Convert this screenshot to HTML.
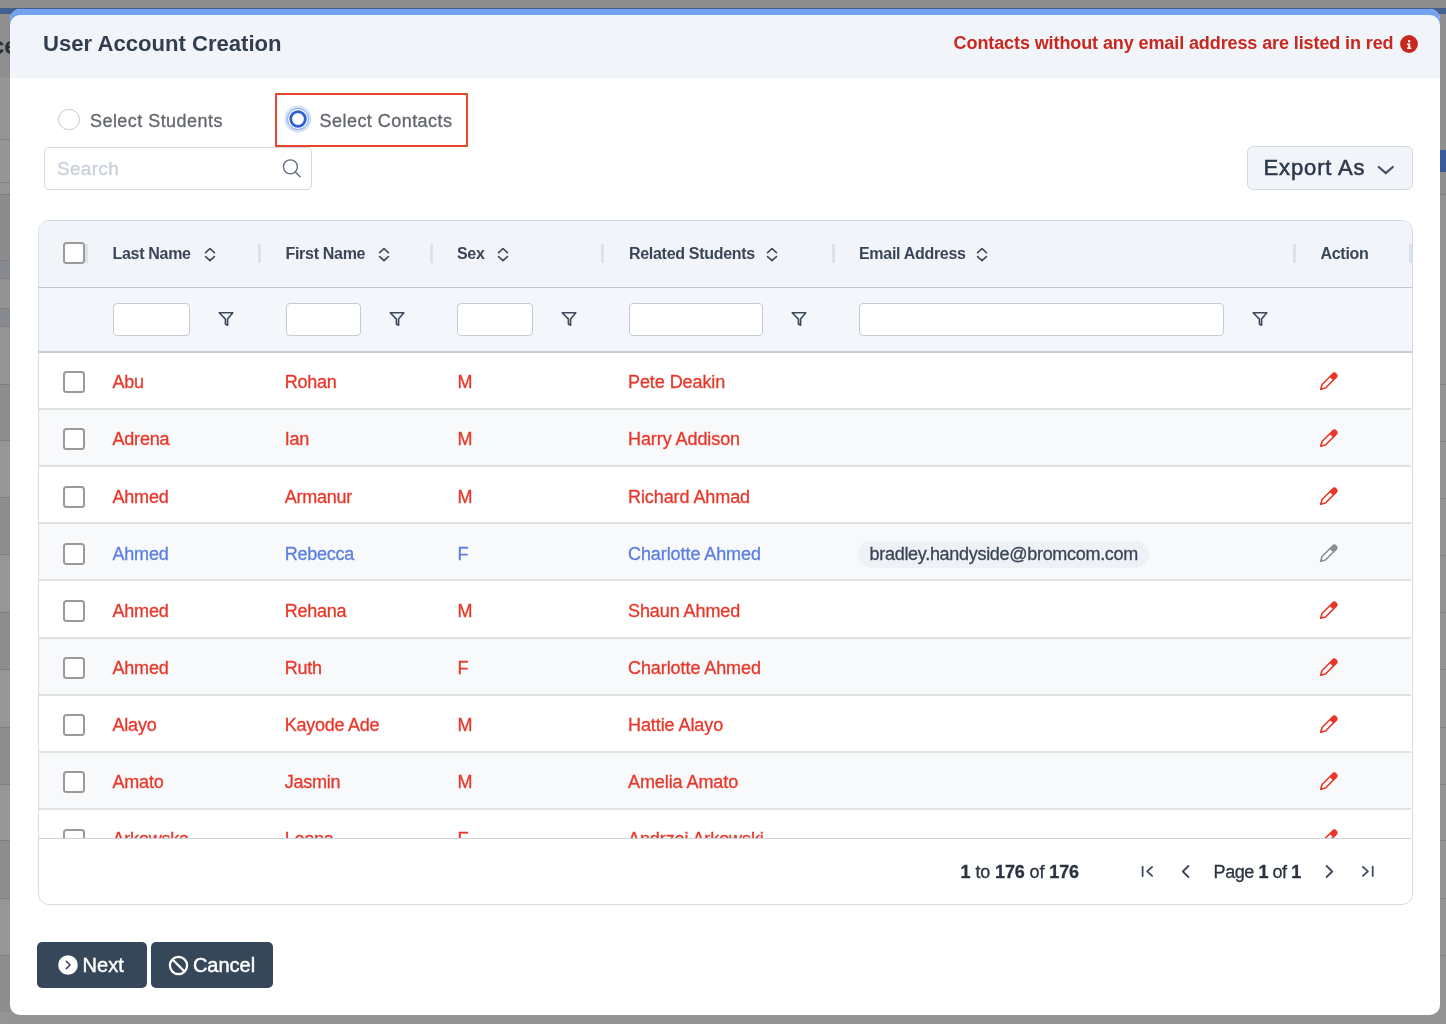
<!DOCTYPE html>
<html><head><meta charset="utf-8"><style>
*{box-sizing:border-box;margin:0;padding:0}
html,body{width:1446px;height:1024px;overflow:hidden}
body{background:#939393;font-family:"Liberation Sans",sans-serif;position:relative;will-change:transform}
.t{position:absolute;white-space:nowrap;line-height:normal;-webkit-font-smoothing:antialiased}
.a{position:absolute}
</style></head><body>
<div class="a" style="left:0;top:0;width:1446px;height:8px;background:#8e8e8e"></div>
<div class="a" style="left:0;top:8px;width:1446px;height:6px;background:#41608f"></div>
<div class="a" style="left:0;top:14px;width:10px;height:63px;background:#8f8f8f"></div>
<div class="a" style="left:0;top:77px;width:10px;height:117px;background:#959595"></div>
<div class="a" style="left:0;top:194px;width:10px;height:66px;background:#8b8c8e"></div>
<div class="a" style="left:0;top:260px;width:10px;height:19px;background:#878b90"></div>
<div class="a" style="left:0;top:279px;width:10px;height:29px;background:#939393"></div>
<div class="a" style="left:0;top:308px;width:10px;height:18px;background:#878b90"></div>
<div class="a" style="left:0;top:326px;width:10px;height:58px;background:#949494"></div>
<div class="a" style="left:0;top:384px;width:10px;height:56px;background:#8d8d8d"></div>
<div class="a" style="left:0;top:440px;width:10px;height:57px;background:#969696"></div>
<div class="a" style="left:0;top:497px;width:10px;height:57px;background:#8d8d8d"></div>
<div class="a" style="left:0;top:554px;width:10px;height:58px;background:#969696"></div>
<div class="a" style="left:0;top:612px;width:10px;height:57px;background:#8d8d8d"></div>
<div class="a" style="left:0;top:669px;width:10px;height:58px;background:#969696"></div>
<div class="a" style="left:0;top:727px;width:10px;height:57px;background:#8d8d8d"></div>
<div class="a" style="left:0;top:784px;width:10px;height:56px;background:#969696"></div>
<div class="a" style="left:0;top:840px;width:10px;height:58px;background:#8d8d8d"></div>
<div class="a" style="left:0;top:898px;width:10px;height:57px;background:#969696"></div>
<div class="a" style="left:0;top:955px;width:10px;height:57px;background:#8d8d8d"></div>
<div class="a" style="left:0;top:1012px;width:10px;height:12px;background:#959595"></div>
<div class="a" style="left:0;top:139px;width:10px;height:1px;background:#7e7e7e"></div>
<div class="a" style="left:0;top:182px;width:10px;height:1px;background:#7e7e7e"></div>
<div class="a" style="left:0;top:194px;width:10px;height:1px;background:#7e7e7e"></div>
<div class="a" style="left:0;top:260px;width:10px;height:1px;background:#7e7e7e"></div>
<div class="a" style="left:0;top:278px;width:10px;height:1px;background:#7e7e7e"></div>
<div class="a" style="left:0;top:308px;width:10px;height:1px;background:#7e7e7e"></div>
<div class="a" style="left:0;top:326px;width:10px;height:1px;background:#7e7e7e"></div>
<div class="a" style="left:0;top:384px;width:10px;height:1px;background:#7e7e7e"></div>
<div class="a" style="left:0;top:440px;width:10px;height:1px;background:#7e7e7e"></div>
<div class="a" style="left:0;top:497px;width:10px;height:1px;background:#7e7e7e"></div>
<div class="a" style="left:0;top:554px;width:10px;height:1px;background:#7e7e7e"></div>
<div class="a" style="left:0;top:612px;width:10px;height:1px;background:#7e7e7e"></div>
<div class="a" style="left:0;top:669px;width:10px;height:1px;background:#7e7e7e"></div>
<div class="a" style="left:0;top:727px;width:10px;height:1px;background:#7e7e7e"></div>
<div class="a" style="left:0;top:784px;width:10px;height:1px;background:#7e7e7e"></div>
<div class="a" style="left:0;top:840px;width:10px;height:1px;background:#7e7e7e"></div>
<div class="a" style="left:0;top:898px;width:10px;height:1px;background:#7e7e7e"></div>
<div class="a" style="left:0;top:955px;width:10px;height:1px;background:#7e7e7e"></div>
<div class="a" style="left:1440px;top:14px;width:6px;height:136px;background:#8f8f8f"></div>
<div class="a" style="left:1440px;top:150px;width:6px;height:22px;background:#3a5a9a"></div>
<div class="a" style="left:1440px;top:172px;width:6px;height:22px;background:#8f8f8f"></div>
<div class="a" style="left:1440px;top:194px;width:6px;height:830px;background:#939393"></div>
<div class="a" style="left:1440px;top:194px;width:6px;height:1px;background:#808080"></div>
<div class="a" style="left:1440px;top:384px;width:6px;height:1px;background:#808080"></div>
<div class="a" style="left:1440px;top:441px;width:6px;height:1px;background:#808080"></div>
<div class="a" style="left:1440px;top:498px;width:6px;height:1px;background:#808080"></div>
<div class="a" style="left:1440px;top:555px;width:6px;height:1px;background:#808080"></div>
<div class="a" style="left:1440px;top:612px;width:6px;height:1px;background:#808080"></div>
<div class="a" style="left:1440px;top:669px;width:6px;height:1px;background:#808080"></div>
<div class="a" style="left:1440px;top:727px;width:6px;height:1px;background:#808080"></div>
<div class="a" style="left:1440px;top:784px;width:6px;height:1px;background:#808080"></div>
<div class="a" style="left:1440px;top:840px;width:6px;height:1px;background:#808080"></div>
<div class="a" style="left:1440px;top:898px;width:6px;height:1px;background:#808080"></div>
<div class="a" style="left:1440px;top:955px;width:6px;height:1px;background:#808080"></div>
<div class="t" style="left:-9px;top:31.5px;font-size:24px;font-weight:bold;color:#2a2f38">ce</div>
<div class="a" style="left:10px;top:9px;width:1430px;height:1006px;background:#fff;border-radius:10px;overflow:hidden"><div class="a" style="left:0;top:0;width:1430px;height:24px;background:#72a3f3"></div><div class="a" style="left:0;top:6px;width:1430px;height:63px;background:#f1f4f9;border-radius:10px 10px 0 0"></div></div>
<div class="t" style="left:43px;top:30.70px;font-size:22.1px;font-weight:bold;color:#323e50;">User Account Creation</div>

<div class="t" style="left:953.6px;top:33.41px;font-size:18px;font-weight:bold;color:#c9281e;letter-spacing:-0.1px">Contacts without any email address are listed in red</div>

<svg class="a" style="left:1400.2px;top:35.3px" width="18" height="18" viewBox="0 0 18 18"><circle cx="9" cy="9" r="8.9" fill="#c9281e"/><rect x="8" y="5.2" width="2.2" height="2.1" fill="#fff"/><path d="M7 8.4h3.2v4h1.1v1.6H7v-1.6h1.2v-2.4H7z" fill="#fff"/></svg>
<div class="a" style="left:58px;top:108.5px;width:21.5px;height:21.5px;border-radius:50%;border:1.5px solid #c8c8c8;background:#fff"></div>
<div class="t" style="left:90px;top:110.91px;font-size:18px;font-weight:normal;color:#62666d;-webkit-text-stroke:0.3px #62666d;letter-spacing:0.45px">Select Students</div>

<div class="a" style="left:275px;top:93px;width:193px;height:54px;border:2.4px solid #e8462e"></div>
<svg class="a" style="left:284px;top:105px" width="28" height="28" viewBox="0 0 28 28"><circle cx="14" cy="14" r="13.5" fill="#d3e1f6"/><circle cx="14" cy="14" r="10.5" fill="#fff" stroke="#7fa3e6" stroke-width="1"/><circle cx="14" cy="14" r="7.3" fill="none" stroke="#2f5fd0" stroke-width="2.8"/></svg>
<div class="t" style="left:319.6px;top:110.91px;font-size:18px;font-weight:normal;color:#62666d;-webkit-text-stroke:0.3px #62666d;letter-spacing:0.45px">Select Contacts</div>

<div class="a" style="left:44px;top:147px;width:268px;height:43px;border:1.5px solid #cfd7e2;border-radius:5px;background:#fff"></div>
<div class="t" style="left:57px;top:157.81px;font-size:19px;font-weight:normal;color:#c8d0da;-webkit-text-stroke:0.3px #c8d0da;letter-spacing:0.3px">Search</div>

<svg class="a" style="left:280px;top:157px" width="24" height="24" viewBox="0 0 24 24"><circle cx="10.4" cy="9.8" r="7" fill="none" stroke="#626f82" stroke-width="1.35"/><path d="M15.4 15l4.7 4.7" stroke="#626f82" stroke-width="1.5" stroke-linecap="round"/></svg>
<div class="a" style="left:1246.5px;top:146px;width:166px;height:43.5px;border:1.5px solid #d3dbe5;border-radius:6px;background:#f1f4f9"></div>
<div class="t" style="left:1263.6px;top:155.39px;font-size:22px;font-weight:normal;color:#2d3a4c;-webkit-text-stroke:0.55px #2d3a4c;letter-spacing:0.85px;">Export As</div>

<svg class="a" style="left:1376px;top:161px" width="20" height="16" viewBox="0 0 20 16"><path d="M2.8 6l7 6.2 7-6.2" fill="none" stroke="#46546a" stroke-width="2.3" stroke-linecap="round" stroke-linejoin="round"/></svg>
<div class="a" style="left:37.5px;top:219.5px;width:1375.5px;height:685.3px;border:1.6px solid #d6dbe3;border-radius:11px;background:#fff;overflow:hidden">
<div class="a" style="left:0;top:0;width:100%;height:67px;background:#f1f4f9;border-bottom:1.8px solid #c3c8cf"></div>
<div class="a" style="left:0;top:67px;width:100%;height:65px;background:#f3f7fb;border-bottom:2px solid #c9ced5"></div>
</div>
<div class="a" style="left:39px;top:353px;width:1372.4px;height:485.5px;overflow:hidden">
<div class="a" style="left:0;top:0.0px;width:100%;height:57.1px;background:#fff;border-bottom:2px solid #e0e1e1"></div>
<div class="a" style="left:24.299999999999997px;top:18.3px;width:22px;height:22px;border:2.5px solid #9a9a9a;border-radius:3.5px;background:#fff"></div>
<div class="t" style="left:73.5px;top:19.29px;font-size:18px;font-weight:normal;color:#e8372a;-webkit-text-stroke:0.3px #e8372a;letter-spacing:-0.2px">Abu</div>

<div class="t" style="left:245.8px;top:19.29px;font-size:18px;font-weight:normal;color:#e8372a;-webkit-text-stroke:0.3px #e8372a;letter-spacing:-0.25px">Rohan</div>

<div class="t" style="left:418.5px;top:19.29px;font-size:18px;font-weight:normal;color:#e8372a;-webkit-text-stroke:0.3px #e8372a;">M</div>

<div class="t" style="left:589px;top:19.29px;font-size:18px;font-weight:normal;color:#e8372a;-webkit-text-stroke:0.3px #e8372a;letter-spacing:-0.08px">Pete Deakin</div>

<svg class="a" style="left:1280px;top:19.2px" width="19" height="19" viewBox="0 0 20 20"><path d="M1.8 18.2L3.2 13.2 14.3 2.1a2.4 2.4 0 0 1 3.6 3.6L6.8 16.8z" fill="none" stroke="#e8372a" stroke-width="1.7" stroke-linejoin="round"/><path d="M11.2 5.2L14.3 2.1a2.4 2.4 0 0 1 3.6 3.6L14.8 8.8z" fill="#e8372a"/></svg>
<div class="a" style="left:0;top:57.1px;width:100%;height:57.1px;background:#f8f9fa;border-bottom:2px solid #e0e1e1"></div>
<div class="a" style="left:24.299999999999997px;top:75.4px;width:22px;height:22px;border:2.5px solid #9a9a9a;border-radius:3.5px;background:#fff"></div>
<div class="t" style="left:73.5px;top:76.43px;font-size:18px;font-weight:normal;color:#e8372a;-webkit-text-stroke:0.3px #e8372a;letter-spacing:-0.2px">Adrena</div>

<div class="t" style="left:245.8px;top:76.43px;font-size:18px;font-weight:normal;color:#e8372a;-webkit-text-stroke:0.3px #e8372a;letter-spacing:-0.25px">Ian</div>

<div class="t" style="left:418.5px;top:76.43px;font-size:18px;font-weight:normal;color:#e8372a;-webkit-text-stroke:0.3px #e8372a;">M</div>

<div class="t" style="left:589px;top:76.43px;font-size:18px;font-weight:normal;color:#e8372a;-webkit-text-stroke:0.3px #e8372a;letter-spacing:-0.08px">Harry Addison</div>

<svg class="a" style="left:1280px;top:76.3px" width="19" height="19" viewBox="0 0 20 20"><path d="M1.8 18.2L3.2 13.2 14.3 2.1a2.4 2.4 0 0 1 3.6 3.6L6.8 16.8z" fill="none" stroke="#e8372a" stroke-width="1.7" stroke-linejoin="round"/><path d="M11.2 5.2L14.3 2.1a2.4 2.4 0 0 1 3.6 3.6L14.8 8.8z" fill="#e8372a"/></svg>
<div class="a" style="left:0;top:114.3px;width:100%;height:57.1px;background:#fff;border-bottom:2px solid #e0e1e1"></div>
<div class="a" style="left:24.299999999999997px;top:132.6px;width:22px;height:22px;border:2.5px solid #9a9a9a;border-radius:3.5px;background:#fff"></div>
<div class="t" style="left:73.5px;top:133.59px;font-size:18px;font-weight:normal;color:#e8372a;-webkit-text-stroke:0.3px #e8372a;letter-spacing:-0.2px">Ahmed</div>

<div class="t" style="left:245.8px;top:133.59px;font-size:18px;font-weight:normal;color:#e8372a;-webkit-text-stroke:0.3px #e8372a;letter-spacing:-0.25px">Armanur</div>

<div class="t" style="left:418.5px;top:133.59px;font-size:18px;font-weight:normal;color:#e8372a;-webkit-text-stroke:0.3px #e8372a;">M</div>

<div class="t" style="left:589px;top:133.59px;font-size:18px;font-weight:normal;color:#e8372a;-webkit-text-stroke:0.3px #e8372a;letter-spacing:-0.08px">Richard Ahmad</div>

<svg class="a" style="left:1280px;top:133.5px" width="19" height="19" viewBox="0 0 20 20"><path d="M1.8 18.2L3.2 13.2 14.3 2.1a2.4 2.4 0 0 1 3.6 3.6L6.8 16.8z" fill="none" stroke="#e8372a" stroke-width="1.7" stroke-linejoin="round"/><path d="M11.2 5.2L14.3 2.1a2.4 2.4 0 0 1 3.6 3.6L14.8 8.8z" fill="#e8372a"/></svg>
<div class="a" style="left:0;top:171.4px;width:100%;height:57.1px;background:#f8f9fa;border-bottom:2px solid #e0e1e1"></div>
<div class="a" style="left:24.299999999999997px;top:189.7px;width:22px;height:22px;border:2.5px solid #9a9a9a;border-radius:3.5px;background:#fff"></div>
<div class="t" style="left:73.5px;top:190.73px;font-size:18px;font-weight:normal;color:#5b7fe0;-webkit-text-stroke:0.3px #5b7fe0;letter-spacing:-0.2px">Ahmed</div>

<div class="t" style="left:245.8px;top:190.73px;font-size:18px;font-weight:normal;color:#5b7fe0;-webkit-text-stroke:0.3px #5b7fe0;letter-spacing:-0.25px">Rebecca</div>

<div class="t" style="left:418.5px;top:190.73px;font-size:18px;font-weight:normal;color:#5b7fe0;-webkit-text-stroke:0.3px #5b7fe0;">F</div>

<div class="t" style="left:589px;top:190.73px;font-size:18px;font-weight:normal;color:#5b7fe0;-webkit-text-stroke:0.3px #5b7fe0;letter-spacing:-0.08px">Charlotte Ahmed</div>

<div class="a" style="left:819.3px;top:187.8px;width:291px;height:27.5px;border-radius:14px;background:#eef1f6"></div>
<div class="t" style="left:830.6px;top:190.73px;font-size:18px;font-weight:normal;color:#3a4556;-webkit-text-stroke:0.3px #3a4556;letter-spacing:-0.3px">bradley.handyside@bromcom.com</div>

<svg class="a" style="left:1280px;top:190.6px" width="19" height="19" viewBox="0 0 20 20"><path d="M1.8 18.2L3.2 13.2 14.3 2.1a2.4 2.4 0 0 1 3.6 3.6L6.8 16.8z" fill="none" stroke="#8a8f96" stroke-width="1.7" stroke-linejoin="round"/><path d="M11.2 5.2L14.3 2.1a2.4 2.4 0 0 1 3.6 3.6L14.8 8.8z" fill="#8a8f96"/></svg>
<div class="a" style="left:0;top:228.6px;width:100%;height:57.1px;background:#fff;border-bottom:2px solid #e0e1e1"></div>
<div class="a" style="left:24.299999999999997px;top:246.9px;width:22px;height:22px;border:2.5px solid #9a9a9a;border-radius:3.5px;background:#fff"></div>
<div class="t" style="left:73.5px;top:247.89px;font-size:18px;font-weight:normal;color:#e8372a;-webkit-text-stroke:0.3px #e8372a;letter-spacing:-0.2px">Ahmed</div>

<div class="t" style="left:245.8px;top:247.89px;font-size:18px;font-weight:normal;color:#e8372a;-webkit-text-stroke:0.3px #e8372a;letter-spacing:-0.25px">Rehana</div>

<div class="t" style="left:418.5px;top:247.89px;font-size:18px;font-weight:normal;color:#e8372a;-webkit-text-stroke:0.3px #e8372a;">M</div>

<div class="t" style="left:589px;top:247.89px;font-size:18px;font-weight:normal;color:#e8372a;-webkit-text-stroke:0.3px #e8372a;letter-spacing:-0.08px">Shaun Ahmed</div>

<svg class="a" style="left:1280px;top:247.8px" width="19" height="19" viewBox="0 0 20 20"><path d="M1.8 18.2L3.2 13.2 14.3 2.1a2.4 2.4 0 0 1 3.6 3.6L6.8 16.8z" fill="none" stroke="#e8372a" stroke-width="1.7" stroke-linejoin="round"/><path d="M11.2 5.2L14.3 2.1a2.4 2.4 0 0 1 3.6 3.6L14.8 8.8z" fill="#e8372a"/></svg>
<div class="a" style="left:0;top:285.8px;width:100%;height:57.1px;background:#f8f9fa;border-bottom:2px solid #e0e1e1"></div>
<div class="a" style="left:24.299999999999997px;top:304.0px;width:22px;height:22px;border:2.5px solid #9a9a9a;border-radius:3.5px;background:#fff"></div>
<div class="t" style="left:73.5px;top:305.03px;font-size:18px;font-weight:normal;color:#e8372a;-webkit-text-stroke:0.3px #e8372a;letter-spacing:-0.2px">Ahmed</div>

<div class="t" style="left:245.8px;top:305.03px;font-size:18px;font-weight:normal;color:#e8372a;-webkit-text-stroke:0.3px #e8372a;letter-spacing:-0.25px">Ruth</div>

<div class="t" style="left:418.5px;top:305.03px;font-size:18px;font-weight:normal;color:#e8372a;-webkit-text-stroke:0.3px #e8372a;">F</div>

<div class="t" style="left:589px;top:305.03px;font-size:18px;font-weight:normal;color:#e8372a;-webkit-text-stroke:0.3px #e8372a;letter-spacing:-0.08px">Charlotte Ahmed</div>

<svg class="a" style="left:1280px;top:304.9px" width="19" height="19" viewBox="0 0 20 20"><path d="M1.8 18.2L3.2 13.2 14.3 2.1a2.4 2.4 0 0 1 3.6 3.6L6.8 16.8z" fill="none" stroke="#e8372a" stroke-width="1.7" stroke-linejoin="round"/><path d="M11.2 5.2L14.3 2.1a2.4 2.4 0 0 1 3.6 3.6L14.8 8.8z" fill="#e8372a"/></svg>
<div class="a" style="left:0;top:342.9px;width:100%;height:57.1px;background:#fff;border-bottom:2px solid #e0e1e1"></div>
<div class="a" style="left:24.299999999999997px;top:361.2px;width:22px;height:22px;border:2.5px solid #9a9a9a;border-radius:3.5px;background:#fff"></div>
<div class="t" style="left:73.5px;top:362.18px;font-size:18px;font-weight:normal;color:#e8372a;-webkit-text-stroke:0.3px #e8372a;letter-spacing:-0.2px">Alayo</div>

<div class="t" style="left:245.8px;top:362.18px;font-size:18px;font-weight:normal;color:#e8372a;-webkit-text-stroke:0.3px #e8372a;letter-spacing:-0.25px">Kayode Ade</div>

<div class="t" style="left:418.5px;top:362.18px;font-size:18px;font-weight:normal;color:#e8372a;-webkit-text-stroke:0.3px #e8372a;">M</div>

<div class="t" style="left:589px;top:362.18px;font-size:18px;font-weight:normal;color:#e8372a;-webkit-text-stroke:0.3px #e8372a;letter-spacing:-0.08px">Hattie Alayo</div>

<svg class="a" style="left:1280px;top:362.1px" width="19" height="19" viewBox="0 0 20 20"><path d="M1.8 18.2L3.2 13.2 14.3 2.1a2.4 2.4 0 0 1 3.6 3.6L6.8 16.8z" fill="none" stroke="#e8372a" stroke-width="1.7" stroke-linejoin="round"/><path d="M11.2 5.2L14.3 2.1a2.4 2.4 0 0 1 3.6 3.6L14.8 8.8z" fill="#e8372a"/></svg>
<div class="a" style="left:0;top:400.1px;width:100%;height:57.1px;background:#f8f9fa;border-bottom:2px solid #e0e1e1"></div>
<div class="a" style="left:24.299999999999997px;top:418.3px;width:22px;height:22px;border:2.5px solid #9a9a9a;border-radius:3.5px;background:#fff"></div>
<div class="t" style="left:73.5px;top:419.33px;font-size:18px;font-weight:normal;color:#e8372a;-webkit-text-stroke:0.3px #e8372a;letter-spacing:-0.2px">Amato</div>

<div class="t" style="left:245.8px;top:419.33px;font-size:18px;font-weight:normal;color:#e8372a;-webkit-text-stroke:0.3px #e8372a;letter-spacing:-0.25px">Jasmin</div>

<div class="t" style="left:418.5px;top:419.33px;font-size:18px;font-weight:normal;color:#e8372a;-webkit-text-stroke:0.3px #e8372a;">M</div>

<div class="t" style="left:589px;top:419.33px;font-size:18px;font-weight:normal;color:#e8372a;-webkit-text-stroke:0.3px #e8372a;letter-spacing:-0.08px">Amelia Amato</div>

<svg class="a" style="left:1280px;top:419.2px" width="19" height="19" viewBox="0 0 20 20"><path d="M1.8 18.2L3.2 13.2 14.3 2.1a2.4 2.4 0 0 1 3.6 3.6L6.8 16.8z" fill="none" stroke="#e8372a" stroke-width="1.7" stroke-linejoin="round"/><path d="M11.2 5.2L14.3 2.1a2.4 2.4 0 0 1 3.6 3.6L14.8 8.8z" fill="#e8372a"/></svg>
<div class="a" style="left:0;top:457.2px;width:100%;height:57.1px;background:#fff;border-bottom:2px solid #e0e1e1"></div>
<div class="a" style="left:24.299999999999997px;top:475.5px;width:22px;height:22px;border:2.5px solid #9a9a9a;border-radius:3.5px;background:#fff"></div>
<div class="t" style="left:73.5px;top:476.48px;font-size:18px;font-weight:normal;color:#e8372a;-webkit-text-stroke:0.3px #e8372a;letter-spacing:-0.2px">Arkowska</div>

<div class="t" style="left:245.8px;top:476.48px;font-size:18px;font-weight:normal;color:#e8372a;-webkit-text-stroke:0.3px #e8372a;letter-spacing:-0.25px">Leona</div>

<div class="t" style="left:418.5px;top:476.48px;font-size:18px;font-weight:normal;color:#e8372a;-webkit-text-stroke:0.3px #e8372a;">F</div>

<div class="t" style="left:589px;top:476.48px;font-size:18px;font-weight:normal;color:#e8372a;-webkit-text-stroke:0.3px #e8372a;letter-spacing:-0.08px">Andrzej Arkowski</div>

<svg class="a" style="left:1280px;top:476.4px" width="19" height="19" viewBox="0 0 20 20"><path d="M1.8 18.2L3.2 13.2 14.3 2.1a2.4 2.4 0 0 1 3.6 3.6L6.8 16.8z" fill="none" stroke="#e8372a" stroke-width="1.7" stroke-linejoin="round"/><path d="M11.2 5.2L14.3 2.1a2.4 2.4 0 0 1 3.6 3.6L14.8 8.8z" fill="#e8372a"/></svg>
</div>
<div class="a" style="left:63.3px;top:242.4px;width:21.6px;height:21.6px;border:2.5px solid #9a9a9a;border-radius:3.5px;background:#fff"></div>
<div class="t" style="left:112.5px;top:245.12px;font-size:16px;font-weight:bold;color:#3a4557;letter-spacing:-0.3px">Last Name</div>

<svg class="a" style="left:203px;top:241.5px" width="14" height="22" viewBox="0 0 14 22"><path d="M2.6 10.6l4.4-4.1 4.4 4.1M2.6 14.6l4.4 4.1 4.4-4.1" fill="none" stroke="#3d4a5c" stroke-width="1.6" stroke-linecap="round" stroke-linejoin="round"/></svg>
<div class="t" style="left:285.5px;top:245.12px;font-size:16px;font-weight:bold;color:#3a4557;letter-spacing:-0.3px">First Name</div>

<svg class="a" style="left:377px;top:241.5px" width="14" height="22" viewBox="0 0 14 22"><path d="M2.6 10.6l4.4-4.1 4.4 4.1M2.6 14.6l4.4 4.1 4.4-4.1" fill="none" stroke="#3d4a5c" stroke-width="1.6" stroke-linecap="round" stroke-linejoin="round"/></svg>
<div class="t" style="left:457px;top:245.12px;font-size:16px;font-weight:bold;color:#3a4557;letter-spacing:-0.3px">Sex</div>

<svg class="a" style="left:495.6px;top:241.5px" width="14" height="22" viewBox="0 0 14 22"><path d="M2.6 10.6l4.4-4.1 4.4 4.1M2.6 14.6l4.4 4.1 4.4-4.1" fill="none" stroke="#3d4a5c" stroke-width="1.6" stroke-linecap="round" stroke-linejoin="round"/></svg>
<div class="t" style="left:629px;top:245.12px;font-size:16px;font-weight:bold;color:#3a4557;letter-spacing:-0.3px">Related Students</div>

<svg class="a" style="left:765px;top:241.5px" width="14" height="22" viewBox="0 0 14 22"><path d="M2.6 10.6l4.4-4.1 4.4 4.1M2.6 14.6l4.4 4.1 4.4-4.1" fill="none" stroke="#3d4a5c" stroke-width="1.6" stroke-linecap="round" stroke-linejoin="round"/></svg>
<div class="t" style="left:859px;top:245.12px;font-size:16px;font-weight:bold;color:#3a4557;letter-spacing:-0.3px">Email Address</div>

<svg class="a" style="left:975.4px;top:241.5px" width="14" height="22" viewBox="0 0 14 22"><path d="M2.6 10.6l4.4-4.1 4.4 4.1M2.6 14.6l4.4 4.1 4.4-4.1" fill="none" stroke="#3d4a5c" stroke-width="1.6" stroke-linecap="round" stroke-linejoin="round"/></svg>
<div class="t" style="left:1320.5px;top:245.12px;font-size:16px;font-weight:bold;color:#3a4557;letter-spacing:-0.3px">Action</div>

<div class="a" style="left:84.5px;top:244px;width:3px;height:19px;background:#dde1ea"></div>
<div class="a" style="left:258.2px;top:244px;width:3px;height:19px;background:#dde1ea"></div>
<div class="a" style="left:430.2px;top:244px;width:3px;height:19px;background:#dde1ea"></div>
<div class="a" style="left:601.3px;top:244px;width:3px;height:19px;background:#dde1ea"></div>
<div class="a" style="left:831.6px;top:244px;width:3px;height:19px;background:#dde1ea"></div>
<div class="a" style="left:1293px;top:244px;width:3px;height:19px;background:#dde1ea"></div>
<div class="a" style="left:1408.5px;top:244px;width:3px;height:19px;background:#dde1ea"></div>
<div class="a" style="left:113px;top:303px;width:76.5px;height:32.5px;border:1.5px solid #c6cbd2;border-radius:4px;background:#fff"></div>
<svg class="a" style="left:217px;top:310px" width="18" height="18" viewBox="0 0 18 18"><path d="M2.2 2.8h13.6l-5.2 6.3v6.2l-2.2-1.3V9.1z" fill="none" stroke="#3d4a5c" stroke-width="1.6" stroke-linejoin="round"/></svg>
<div class="a" style="left:285.6px;top:303px;width:75.39999999999998px;height:32.5px;border:1.5px solid #c6cbd2;border-radius:4px;background:#fff"></div>
<svg class="a" style="left:388.4px;top:310px" width="18" height="18" viewBox="0 0 18 18"><path d="M2.2 2.8h13.6l-5.2 6.3v6.2l-2.2-1.3V9.1z" fill="none" stroke="#3d4a5c" stroke-width="1.6" stroke-linejoin="round"/></svg>
<div class="a" style="left:457px;top:303px;width:75.5px;height:32.5px;border:1.5px solid #c6cbd2;border-radius:4px;background:#fff"></div>
<svg class="a" style="left:559.8px;top:310px" width="18" height="18" viewBox="0 0 18 18"><path d="M2.2 2.8h13.6l-5.2 6.3v6.2l-2.2-1.3V9.1z" fill="none" stroke="#3d4a5c" stroke-width="1.6" stroke-linejoin="round"/></svg>
<div class="a" style="left:629px;top:303px;width:133.60000000000002px;height:32.5px;border:1.5px solid #c6cbd2;border-radius:4px;background:#fff"></div>
<svg class="a" style="left:789.9px;top:310px" width="18" height="18" viewBox="0 0 18 18"><path d="M2.2 2.8h13.6l-5.2 6.3v6.2l-2.2-1.3V9.1z" fill="none" stroke="#3d4a5c" stroke-width="1.6" stroke-linejoin="round"/></svg>
<div class="a" style="left:858.9px;top:303px;width:365.4px;height:32.5px;border:1.5px solid #c6cbd2;border-radius:4px;background:#fff"></div>
<svg class="a" style="left:1251.4px;top:310px" width="18" height="18" viewBox="0 0 18 18"><path d="M2.2 2.8h13.6l-5.2 6.3v6.2l-2.2-1.3V9.1z" fill="none" stroke="#3d4a5c" stroke-width="1.6" stroke-linejoin="round"/></svg>
<div class="a" style="left:39px;top:837.8px;width:1372.4px;height:1.3px;background:#cfd3d9"></div>
<div class="t" style="left:960.6px;top:862.31px;font-size:18px;font-weight:normal;color:#2b3340;-webkit-text-stroke:0.3px #2b3340;letter-spacing:-0.12px"><b>1</b> to <b>176</b> of <b>176</b></div>

<div class="t" style="left:1213.6px;top:862.31px;font-size:18px;font-weight:normal;color:#2b3340;-webkit-text-stroke:0.3px #2b3340;letter-spacing:-0.45px">Page <b>1</b> of <b>1</b></div>

<svg class="a" style="left:1139px;top:863px" width="18" height="16" viewBox="0 0 18 16"><path d="M3.6 3.7v9.3M13.1 3.9L8.1 8.35l5 4.45" fill="none" stroke="#3d4a5c" stroke-width="1.8" stroke-linecap="round" stroke-linejoin="round"/></svg>
<svg class="a" style="left:1178px;top:863px" width="14" height="16" viewBox="0 0 14 16"><path d="M10.4 3L4.8 8.5l5.6 5.5" fill="none" stroke="#3d4a5c" stroke-width="1.8" stroke-linecap="round" stroke-linejoin="round"/></svg>
<svg class="a" style="left:1322px;top:863px" width="14" height="16" viewBox="0 0 14 16"><path d="M4.6 3l5.6 5.5-5.6 5.5" fill="none" stroke="#3d4a5c" stroke-width="1.8" stroke-linecap="round" stroke-linejoin="round"/></svg>
<svg class="a" style="left:1359px;top:863px" width="18" height="16" viewBox="0 0 18 16"><path d="M3.9 3.9l5 4.45-5 4.45M13.7 3.7v9.3" fill="none" stroke="#3d4a5c" stroke-width="1.8" stroke-linecap="round" stroke-linejoin="round"/></svg>
<div class="a" style="left:37px;top:941.7px;width:109.5px;height:46px;background:#37475a;border-radius:5px"></div>
<svg class="a" style="left:58px;top:954.5px" width="20" height="20" viewBox="0 0 20 20"><circle cx="10" cy="10" r="9.8" fill="#fff"/><path d="M8.3 6.3l3.7 3.7-3.7 3.7" fill="none" stroke="#37475a" stroke-width="1.6" stroke-linecap="round" stroke-linejoin="round"/></svg>
<div class="t" style="left:82.6px;top:954.20px;font-size:20px;font-weight:normal;color:#fff;-webkit-text-stroke:0.45px #fff;">Next</div>

<div class="a" style="left:151.3px;top:941.7px;width:121.5px;height:46px;background:#37475a;border-radius:5px"></div>
<svg class="a" style="left:168px;top:954.5px" width="21" height="21" viewBox="0 0 21 21"><circle cx="10.5" cy="10.5" r="8.6" fill="none" stroke="#fff" stroke-width="2.3"/><path d="M4.5 4.5l12 12" stroke="#fff" stroke-width="2.3"/></svg>
<div class="t" style="left:192.9px;top:954.20px;font-size:20px;font-weight:normal;color:#fff;-webkit-text-stroke:0.45px #fff;">Cancel</div>

</body></html>
